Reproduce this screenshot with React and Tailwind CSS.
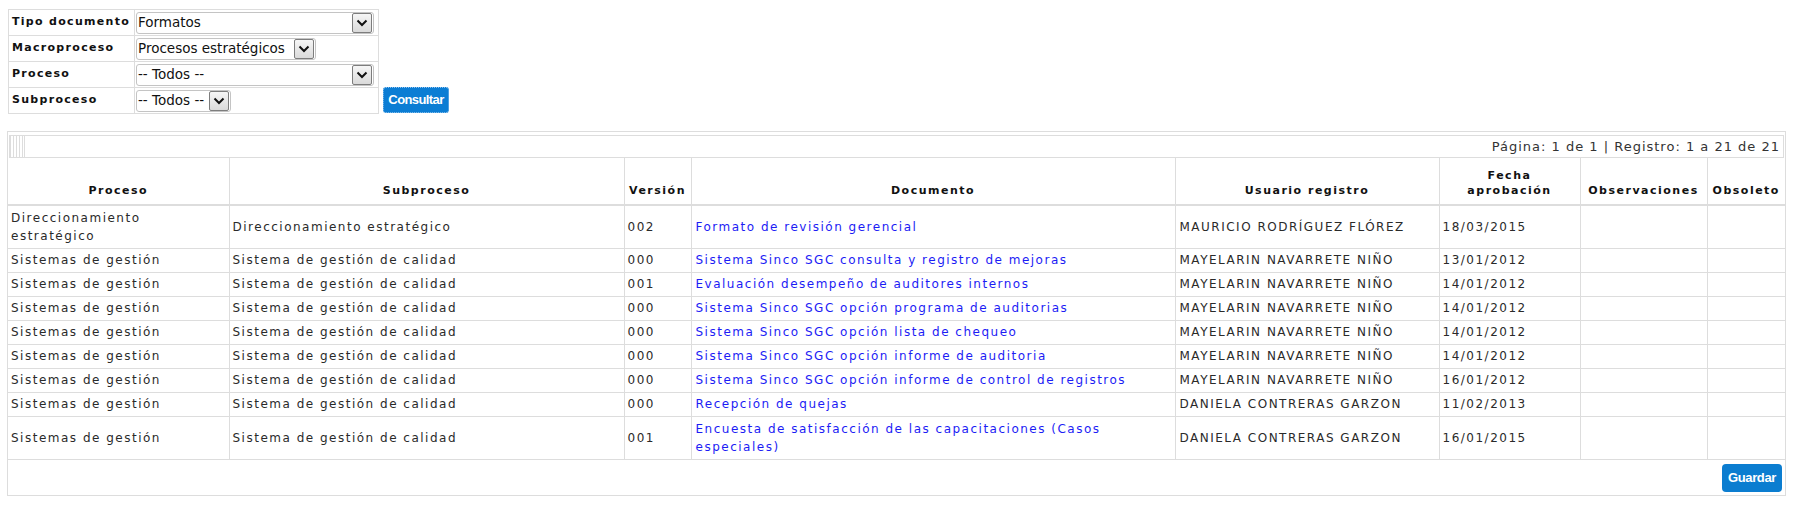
import React from 'react';

const labels = [
    { label: 'Tipo documento', value: 'Formatos', width: 'w-[238px]' },
    { label: 'Macroproceso', value: 'Procesos estratégicos', width: 'w-[180px]' },
    { label: 'Proceso', value: '-- Todos --', width: 'w-[238px]' },
    { label: 'Subproceso', value: '-- Todos --', width: 'w-[95px]' },
];

const rows = [
    { p: ['Direccionamiento', 'estratégico'], s: 'Direccionamiento estratégico', v: '002', d: ['Formato de revisión gerencial'], u: 'MAURICIO RODRÍGUEZ FLÓREZ', f: '18/03/2015', tall: true },
    { p: ['Sistemas de gestión'], s: 'Sistema de gestión de calidad', v: '000', d: ['Sistema Sinco SGC consulta y registro de mejoras'], u: 'MAYELARIN NAVARRETE NIÑO', f: '13/01/2012' },
    { p: ['Sistemas de gestión'], s: 'Sistema de gestión de calidad', v: '001', d: ['Evaluación desempeño de auditores internos'], u: 'MAYELARIN NAVARRETE NIÑO', f: '14/01/2012' },
    { p: ['Sistemas de gestión'], s: 'Sistema de gestión de calidad', v: '000', d: ['Sistema Sinco SGC opción programa de auditorias'], u: 'MAYELARIN NAVARRETE NIÑO', f: '14/01/2012' },
    { p: ['Sistemas de gestión'], s: 'Sistema de gestión de calidad', v: '000', d: ['Sistema Sinco SGC opción lista de chequeo'], u: 'MAYELARIN NAVARRETE NIÑO', f: '14/01/2012' },
    { p: ['Sistemas de gestión'], s: 'Sistema de gestión de calidad', v: '000', d: ['Sistema Sinco SGC opción informe de auditoria'], u: 'MAYELARIN NAVARRETE NIÑO', f: '14/01/2012' },
    { p: ['Sistemas de gestión'], s: 'Sistema de gestión de calidad', v: '000', d: ['Sistema Sinco SGC opción informe de control de registros'], u: 'MAYELARIN NAVARRETE NIÑO', f: '16/01/2012' },
    { p: ['Sistemas de gestión'], s: 'Sistema de gestión de calidad', v: '000', d: ['Recepción de quejas'], u: 'DANIELA CONTRERAS GARZON', f: '11/02/2013' },
    { p: ['Sistemas de gestión'], s: 'Sistema de gestión de calidad', v: '001', d: ['Encuesta de satisfacción de las capacitaciones (Casos', 'especiales)'], u: 'DANIELA CONTRERAS GARZON', f: '16/01/2015', tall: true },
];

const Chevron = () => (
    <svg width="12" height="8" viewBox="0 0 12 8">
        <path d="M1.5 1.5 L6 6 L10.5 1.5" fill="none" stroke="#111" strokeWidth="2" />
    </svg>
);

const FakeSelect = ({ value, width }) => (
    <div className={`flex items-center justify-between h-[22px] border border-[#c4c4c4] rounded-[3px] bg-white ${width}`}>
        <span className="pl-[1px] text-[13.5px] text-[#111] whitespace-nowrap font-['DejaVu_Sans',sans-serif]">{value}</span>
        <span className="mr-[1px] flex items-center justify-center w-[20px] h-[20px] border border-[#7d7d7d] rounded-[2px] bg-linear-to-b from-[#f6f6f6] to-[#dadada]">
            <Chevron />
        </span>
    </div>
);

const headers = [
    ['Proceso'],
    ['Subproceso'],
    ['Versión'],
    ['Documento'],
    ['Usuario registro'],
    ['Fecha', 'aprobación'],
    ['Observaciones'],
    ['Obsoleto'],
];

const App = () => {
    return (
        <div className="w-[1800px] h-[507px] bg-white text-[#2a2a2a] font-['DejaVu_Sans',sans-serif]">
            {/* filtros */}
            <div className="flex items-end pt-[9px] pl-[8px]">
                <table className="table-fixed border-collapse w-[370px]">
                    <colgroup>
                        <col className="w-[126px]" />
                        <col className="w-[244px]" />
                    </colgroup>
                    <tbody>
                        {labels.map((l) => (
                            <tr key={l.label}>
                                <td className="h-[26px] border border-[#dddddd] pl-[3px] text-[11px] font-bold tracking-[1.3px] text-[#111] whitespace-nowrap">
                                    {l.label}
                                </td>
                                <td className="h-[26px] border border-[#dddddd] pl-[1px]">
                                    <FakeSelect value={l.value} width={l.width} />
                                </td>
                            </tr>
                        ))}
                    </tbody>
                </table>
                <button className="ml-[4px] mb-[1px] w-[66px] h-[26px] rounded-[3px] bg-[#0b7dd4] border border-dotted border-[#8fc3ef] text-white text-[13px] font-bold tracking-[-0.6px] font-['Liberation_Sans',sans-serif]">
                    Consultar
                </button>
            </div>

            {/* grilla */}
            <div className="ml-[7px] mt-[17px] w-[1779px] border border-[#dddddd]">
                <div className="mx-[1px] mt-[3px] h-[23px] border border-[#dddddd] flex items-center">
                    <div className="flex h-full w-[15px]">
                        <div className="w-[3px] border-l border-[#dddddd]" />
                        <div className="w-[3px] border-l border-[#dddddd]" />
                        <div className="w-[3px] border-l border-[#dddddd]" />
                        <div className="w-[3px] border-l border-[#dddddd]" />
                        <div className="w-[3px] border-l border-r border-[#dddddd]" />
                    </div>
                    <div className="flex-1 text-right pr-[3px] text-[13px] tracking-[1px] text-[#333]">
                        Página: 1 de 1 | Registro: 1 a 21 de 21
                    </div>
                </div>

                <table className="table-fixed border-collapse border-hidden w-[1777px]">
                    <colgroup>
                        <col className="w-[221px]" />
                        <col className="w-[395px]" />
                        <col className="w-[67px]" />
                        <col className="w-[484px]" />
                        <col className="w-[264px]" />
                        <col className="w-[141px]" />
                        <col className="w-[127px]" />
                        <col className="w-[78px]" />
                    </colgroup>
                    <thead>
                        <tr>
                            {headers.map((h) => (
                                <th key={h[0]} className="h-[47px] border border-b-2 border-[#dddddd] align-bottom pb-[6px] px-[2px] leading-[15px] text-[11px] font-bold tracking-[1.5px] text-center text-[#111]">
                                    {h.map((line, i) => (
                                        <div key={i}>{line}</div>
                                    ))}
                                </th>
                            ))}
                        </tr>
                    </thead>
                    <tbody className="text-[12px] tracking-[1.5px] leading-[18px]">
                        {rows.map((r, i) => (
                            <tr key={i} className={r.tall ? 'h-[43px]' : 'h-[24px]'}>
                                <td className="border border-[#dddddd] px-[3px] align-middle">
                                    {r.p.map((line, k) => (
                                        <div key={k}>{line}</div>
                                    ))}
                                </td>
                                <td className="border border-[#dddddd] px-[3px] align-middle">{r.s}</td>
                                <td className="border border-[#dddddd] px-[3px] align-middle">{r.v}</td>
                                <td className="border border-[#dddddd] px-[4px] align-middle">
                                    <a href="#" className="text-[#1c1cf5]">
                                        {r.d.map((line, k) => (
                                            <div key={k}>{line}</div>
                                        ))}
                                    </a>
                                </td>
                                <td className="border border-[#dddddd] px-[4px] align-middle">{r.u}</td>
                                <td className="border border-[#dddddd] px-[3px] align-middle">{r.f}</td>
                                <td className="border border-[#dddddd]" />
                                <td className="border border-[#dddddd]" />
                            </tr>
                        ))}
                    </tbody>
                </table>

                <div className="border-t border-[#dddddd] h-[36px] flex items-center justify-end pr-[3px]">
                    <button className="w-[60px] h-[28px] rounded-[4px] bg-[#0b7dd0] text-white text-[13px] font-bold tracking-[-0.4px] font-['Liberation_Sans',sans-serif]">
                        Guardar
                    </button>
                </div>
            </div>
        </div>
    );
};

export default App;
